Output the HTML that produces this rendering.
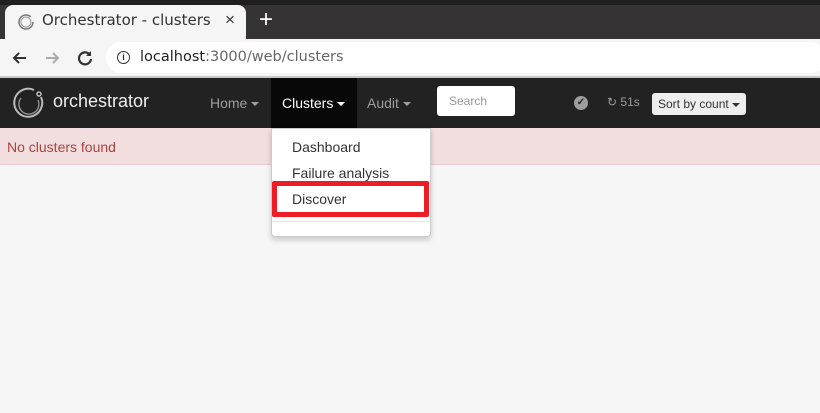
<!DOCTYPE html>
<html><head><style>
*{margin:0;padding:0;box-sizing:border-box}
body{width:820px;height:413px;overflow:hidden;background:#f6f6f6;font-family:"Liberation Sans",sans-serif;position:relative}
.a{position:absolute}
.c{display:inline-block;width:0;height:0;border-left:4px solid transparent;border-right:4px solid transparent;border-top:4px solid currentColor;vertical-align:middle;margin-left:4px}
</style></head><body>
<div class="a" style="left:0;top:0;width:820px;height:5px;background:#1f1f1f"></div>
<div class="a" style="left:0;top:5px;width:820px;height:34px;background:#353333"></div>
<div class="a" style="left:5px;top:5px;width:241px;height:34px;background:#f5f5f5;border-radius:8px 8px 0 0"></div>
<svg class="a" style="left:16px;top:12px" width="20" height="20" viewBox="0 0 20 20"><circle cx="10" cy="10" r="7" fill="none" stroke="#777" stroke-width="1.5" stroke-dasharray="38 6"/><circle cx="10" cy="10" r="5" fill="none" stroke="#999" stroke-width="1"/></svg>
<div class="a" style="left:42px;top:11px;color:#333;font-family:'DejaVu Sans',sans-serif;font-size:15px">Orchestrator - clusters</div>
<div class="a" style="left:225px;top:10px;font-size:17px;color:#333">×</div>
<div class="a" style="left:259px;top:6px;font-size:24px;color:#fff">+</div>
<div class="a" style="left:0;top:39px;width:820px;height:38px;background:#f5f5f5"></div>
<div class="a" style="left:0;top:76px;width:820px;height:2px;background:#c8c8c8"></div>
<div class="a" style="left:106px;top:42px;width:720px;height:31px;background:#fff;border-radius:16px"></div>
<svg class="a" style="left:10px;top:48px" width="20" height="20" viewBox="0 0 20 20"><path d="M16 10H4M9 5L4 10L9 15" fill="none" stroke="#333" stroke-width="2"/></svg>
<svg class="a" style="left:42px;top:48px" width="20" height="20" viewBox="0 0 20 20"><path d="M4 10H16M11 5L16 10L11 15" fill="none" stroke="#aaa" stroke-width="2"/></svg>
<svg class="a" style="left:75px;top:48px" width="20" height="20" viewBox="0 0 20 20"><path d="M15 7A6 6 0 1 0 16 11" fill="none" stroke="#333" stroke-width="2.2"/><path d="M16 3V8H11Z" fill="#333"/></svg>
<div class="a" style="left:117px;top:51px;width:13px;height:13px;border:1.5px solid #333;border-radius:50%;font-size:9px;text-align:center;line-height:10px;font-weight:bold;color:#333">i</div>
<div class="a" style="left:140px;top:49px;font-size:14.5px;color:#222;font-family:'DejaVu Sans',sans-serif">localhost<span style="color:#666">:3000/web/clusters</span></div>
<div class="a" style="left:0;top:78px;width:820px;height:50px;background:#222"></div>
<svg class="a" style="left:12px;top:86px" width="34" height="34" viewBox="0 0 34 34"><path d="M22 4 A14 14 0 1 0 29 11" fill="none" stroke="#bbb" stroke-width="2"/><path d="M9 12 A10 10 0 1 0 26 14" fill="none" stroke="#999" stroke-width="1.3"/><circle cx="27" cy="8" r="2" fill="none" stroke="#bbb" stroke-width="1.5"/></svg>
<div class="a" style="left:53px;top:91px;font-size:18px;color:#eee">orchestrator</div>
<div class="a" style="left:210px;top:95px;font-size:14px;color:#9d9d9d">Home<span class="c"></span></div>
<div class="a" style="left:271px;top:78px;width:86px;height:50px;background:#080808"></div>
<div class="a" style="left:282px;top:95px;font-size:14px;color:#fff">Clusters<span class="c"></span></div>
<div class="a" style="left:367px;top:95px;font-size:14px;color:#9d9d9d">Audit<span class="c"></span></div>
<div class="a" style="left:437px;top:86px;width:78px;height:30px;background:#fff;border-radius:3px;font-size:12px;color:#999;padding:8px 12px">Search</div>
<div class="a" style="left:574px;top:96px;width:14px;height:14px;border-radius:50%;background:#9d9d9d;color:#222;font-size:10px;text-align:center;line-height:14px;font-weight:bold">✓</div>
<div class="a" style="left:607px;top:95px;font-size:12px;color:#9d9d9d">↻ 51s</div>
<div class="a" style="left:652px;top:93px;width:94px;height:22px;background:#eee;border-radius:3px;font-size:12px;color:#333;padding:4px 6px">Sort by count<span class="c" style="margin-left:3px"></span></div>
<div class="a" style="left:0;top:128px;width:820px;height:37px;background:#f2dede;border-bottom:1px solid #ebccd1"></div>
<div class="a" style="left:7px;top:139px;font-size:14px;color:#a94442">No clusters found</div>
<div class="a" style="left:271px;top:128px;width:160px;height:109px;background:#fff;border:1px solid #ccc;border-radius:0 0 4px 4px;box-shadow:0 3px 6px rgba(0,0,0,.18)"></div>
<div class="a" style="left:292px;top:139px;font-size:14px;color:#333">Dashboard</div>
<div class="a" style="left:292px;top:165px;font-size:14px;color:#333">Failure analysis</div>
<div class="a" style="left:272px;top:181px;width:157px;height:36px;border:5px solid #ee1c25;border-radius:2px"></div>
<div class="a" style="left:292px;top:191px;font-size:14px;color:#333">Discover</div>
<div class="a" style="left:272px;top:221px;width:158px;height:1px;background:#e5e5e5"></div>
</body></html>
